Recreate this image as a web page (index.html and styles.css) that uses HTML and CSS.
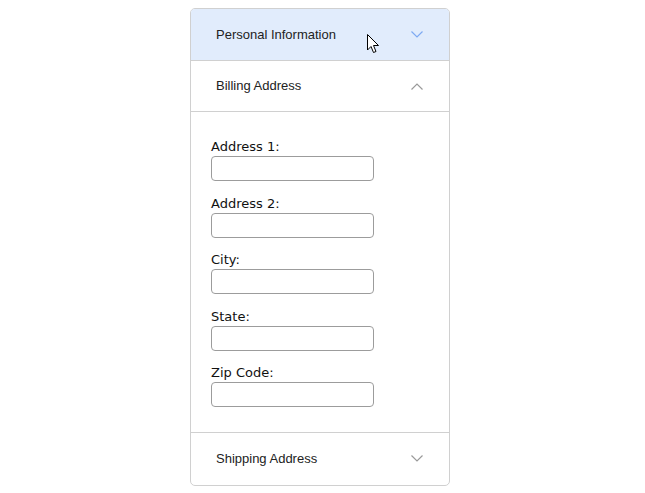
FILE: index.html
```html
<!DOCTYPE html>
<html>
<head>
<meta charset="utf-8">
<link rel="stylesheet" href="styles.css">
</head>
<body>
<div class="accordion">
  <div class="header header-active">
    <span class="title">Personal Information</span>
    <svg class="chev" width="12" height="7" viewBox="0 0 12 7"><polyline points="0.5,0.5 6,6 11.5,0.5" fill="none" stroke="#7eaaf2" stroke-width="1.2"/></svg>
    <svg class="cursor" width="13" height="20" viewBox="0 0 13 20"><path d="M0.5 0.5 L0.5 16 L4 12.5 L6.5 18.5 L9 17.5 L6.5 11.5 L11.5 11.5 Z" fill="#fff" stroke="#000" stroke-width="1" stroke-linejoin="miter"/></svg>
  </div>
  <div class="header">
    <span class="title">Billing Address</span>
    <svg class="chev" width="12" height="7" viewBox="0 0 12 7"><polyline points="0.5,6.5 6,1 11.5,6.5" fill="none" stroke="#9a9a9a" stroke-width="1.2"/></svg>
  </div>
  <div class="body">
    <div class="field"><label>Address 1:</label><input type="text"></div>
    <div class="field"><label>Address 2:</label><input type="text"></div>
    <div class="field"><label>City:</label><input type="text"></div>
    <div class="field"><label>State:</label><input type="text"></div>
    <div class="field"><label>Zip Code:</label><input type="text"></div>
  </div>
  <div class="header last">
    <span class="title">Shipping Address</span>
    <svg class="chev" width="12" height="7" viewBox="0 0 12 7"><polyline points="0.5,0.5 6,6 11.5,0.5" fill="none" stroke="#9a9a9a" stroke-width="1.2"/></svg>
  </div>
</div>
</body>
</html>
```
FILE: styles.css
```css
html, body {
  margin: 0;
  padding: 0;
  background: #fff;
}
body {
  padding-top: 8px;
}
.accordion {
  width: 260px;
  box-sizing: border-box;
  margin-left: 190px;
  border: 1px solid #d0d0d0;
  border-radius: 5px;
  overflow: hidden;
}
.header {
  position: relative;
  height: 51px;
  box-sizing: border-box;
  display: flex;
  align-items: center;
  justify-content: space-between;
  padding: 0 26px 0 25px;
  border-bottom: 1px solid #d0d0d0;
  font-family: "Liberation Sans", Arial, sans-serif;
  font-size: 13px;
  color: #222;
}
.header-active {
  background: #e1ecfc;
  height: 52px;
}
.header.last {
  border-bottom: none;
  height: 52px;
}
.title {
  margin-top: -1px;
}
.chev {
  display: block;
}
.cursor {
  position: absolute;
  left: 176px;
  top: 25px;
}
.body {
  padding: 27px 20px 10px 20px;
  border-bottom: 1px solid #d0d0d0;
  font-family: "DejaVu Sans", Verdana, sans-serif;
  font-size: 13px;
  color: #111;
}
.field {
  display: flex;
  flex-direction: column;
  align-items: flex-start;
  margin-bottom: 14.5px;
}
.field label {
  line-height: 15px;
  margin-bottom: 2px;
}
.field input {
  width: 163px;
  height: 25px;
  box-sizing: border-box;
  border: 1px solid #9c9c9c;
  border-radius: 4px;
  margin: 0;
  padding: 2px 4px;
  font-family: "DejaVu Sans", Verdana, sans-serif;
  font-size: 13px;
}
```
